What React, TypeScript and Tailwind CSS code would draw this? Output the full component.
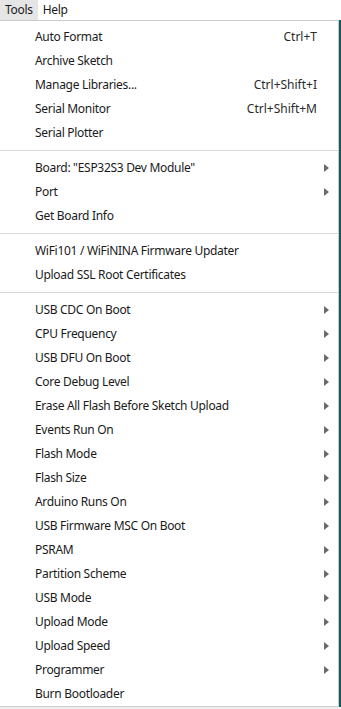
const groups: { label: string; shortcut?: string; sub?: boolean }[][] = [
  [
    { label: 'Auto Format', shortcut: 'Ctrl+T' },
    { label: 'Archive Sketch' },
    { label: 'Manage Libraries...', shortcut: 'Ctrl+Shift+I' },
    { label: 'Serial Monitor', shortcut: 'Ctrl+Shift+M' },
    { label: 'Serial Plotter' },
  ],
  [
    { label: 'Board: "ESP32S3 Dev Module"', sub: true },
    { label: 'Port', sub: true },
    { label: 'Get Board Info' },
  ],
  [{ label: 'WiFi101 / WiFiNINA Firmware Updater' }, { label: 'Upload SSL Root Certificates' }],
  [
    { label: 'USB CDC On Boot', sub: true },
    { label: 'CPU Frequency', sub: true },
    { label: 'USB DFU On Boot', sub: true },
    { label: 'Core Debug Level', sub: true },
    { label: 'Erase All Flash Before Sketch Upload', sub: true },
    { label: 'Events Run On', sub: true },
    { label: 'Flash Mode', sub: true },
    { label: 'Flash Size', sub: true },
    { label: 'Arduino Runs On', sub: true },
    { label: 'USB Firmware MSC On Boot', sub: true },
    { label: 'PSRAM', sub: true },
    { label: 'Partition Scheme', sub: true },
    { label: 'USB Mode', sub: true },
    { label: 'Upload Mode', sub: true },
    { label: 'Upload Speed', sub: true },
    { label: 'Programmer', sub: true },
    { label: 'Burn Bootloader' },
  ],
];

function Arrow() {
  return (
    <svg width="5" height="8" viewBox="0 0 5 8" className="block">
      <path d="M0 0 L5 4 L0 8 Z" fill="#6b6b6b" />
    </svg>
  );
}

export default function App() {
  return (
    <div
      className="w-[341px] h-[709px] bg-[#f0f0f0] overflow-hidden text-[12px] tracking-[-0.3px] text-[#1a1a1a]"
      style={{ fontFamily: '"Noto Sans", "Liberation Sans", sans-serif' }}
    >
      {/* menu bar */}
      <div className="flex h-[20px] bg-white">
        <div className="flex items-center px-[5px] bg-[#e5e5e5] leading-none">Tools</div>
        <div className="flex items-center px-[5px] leading-none">Help</div>
      </div>

      <div className="flex">
        <div className="w-[339px] h-[687px] bg-white border-t border-r border-b border-[#cccccc] pt-[4px]">
          {groups.map((items, gi) => (
            <div key={gi}>
              {gi > 0 && (
                <div className="h-[11px] flex items-center">
                  <div className="w-full h-px bg-[#d9d9d9]" />
                </div>
              )}
              {items.map((item) => (
                <div key={item.label} className="flex items-center h-[24px] pl-[35px] pr-[8px]">
                  <span className="flex-1 whitespace-nowrap">{item.label}</span>
                  {item.shortcut && (
                    <span className="mr-[13px] tracking-normal text-[#2a2a2a]">{item.shortcut}</span>
                  )}
                  {item.sub && (
                    <span className="mr-[1px]">
                      <Arrow />
                    </span>
                  )}
                </div>
              ))}
            </div>
          ))}
        </div>
        <div className="w-[2px] h-[687px] bg-[#0b5f63]" />
      </div>
    </div>
  );
}
